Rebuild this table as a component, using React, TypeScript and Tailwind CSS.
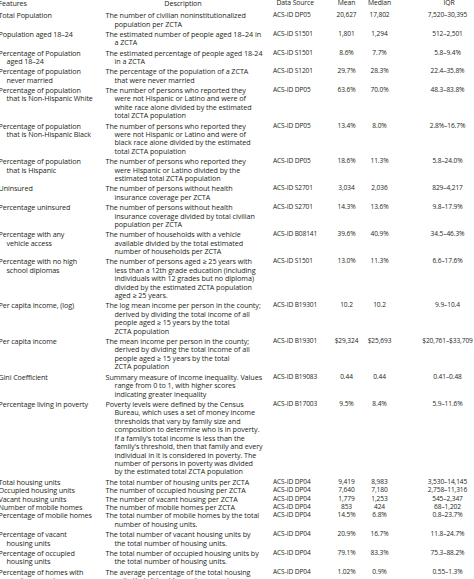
import React from 'react';

type Row = {
  feature: string[];
  desc: string[];
  source: string;
  mean: string;
  median: string;
  iqr: string;
  tight?: boolean;
};

const rows: Row[] = [
  { feature: ['Total Population'], desc: ['The number of civilian noninstitutionalized', 'population per ZCTA'], source: 'ACS-ID DP05', mean: '20,627', median: '17,802', iqr: '7,520–30,395' },
  { feature: ['Population aged 18–24'], desc: ['The estimated number of people aged 18–24 in', 'a ZCTA'], source: 'ACS-ID S1501', mean: '1,801', median: '1,294', iqr: '512–2,501' },
  { feature: ['Percentage of Population', 'aged 18–24'], desc: ['The estimated percentage of people aged 18-24', 'in a ZCTA'], source: 'ACS-ID S1501', mean: '8.6%', median: '7.7%', iqr: '5.8–9.4%' },
  { feature: ['Percentage of population', 'never married'], desc: ['The percentage of the population of a ZCTA', 'that were never married'], source: 'ACS-ID S1201', mean: '29.7%', median: '28.3%', iqr: '22.4–35.8%' },
  { feature: ['Percentage of population', 'that is Non-Hispanic White'], desc: ['The number of persons who reported they', 'were not Hispanic or Latino and were of', 'white race alone divided by the estimated', 'total ZCTA population'], source: 'ACS-ID DP05', mean: '63.6%', median: '70.0%', iqr: '48.3–83.8%' },
  { feature: ['Percentage of population', 'that is Non-Hispanic Black'], desc: ['The number of persons who reported they', 'were not Hispanic or Latino and were of', 'black race alone divided by the estimated', 'total ZCTA population'], source: 'ACS-ID DP05', mean: '13.4%', median: '8.0%', iqr: '2.8%–16.7%' },
  { feature: ['Percentage of population', 'that is Hispanic'], desc: ['The number of persons who reported they', 'were Hispanic or Latino divided by the', 'estimated total ZCTA population'], source: 'ACS-ID DP05', mean: '18.6%', median: '11.3%', iqr: '5.8–24.0%' },
  { feature: ['Uninsured'], desc: ['The number of persons without health', 'insurance coverage per ZCTA'], source: 'ACS-ID S2701', mean: '3,034', median: '2,036', iqr: '829–4,217' },
  { feature: ['Percentage uninsured'], desc: ['The number of persons without health', 'insurance coverage divided by total civilian', 'population per ZCTA'], source: 'ACS-ID S2701', mean: '14.3%', median: '13.6%', iqr: '9.8–17.9%' },
  { feature: ['Percentage with any', 'vehicle access'], desc: ['The number of households with a vehicle', 'available divided by the total estimated', 'number of households per ZCTA'], source: 'ACS-ID B08141', mean: '39.6%', median: '40.9%', iqr: '34.5–46.3%' },
  { feature: ['Percentage with no high', 'school diplomas'], desc: ['The number of persons aged ≥ 25 years with', 'less than a 12th grade education (including', 'individuals with 12 grades but no diploma)', 'divided by the estimated ZCTA population', 'aged ≥ 25 years.'], source: 'ACS-ID S1501', mean: '13.0%', median: '11.3%', iqr: '6.6–17.6%' },
  { feature: ['Per capita income, (log)'], desc: ['The log mean income per person in the county;', 'derived by dividing the total income of all', 'people aged ≥ 15 years by the total', 'ZCTA population'], source: 'ACS-ID B19301', mean: '10.2', median: '10.2', iqr: '9.9–10.4' },
  { feature: ['Per capita income'], desc: ['The mean income per person in the county;', 'derived by dividing the total income of all', 'people aged ≥ 15 years by the total', 'ZCTA population'], source: 'ACS-ID B19301', mean: '$29,324', median: '$25,693', iqr: '$20,761–$33,709' },
  { feature: ['Gini Coefficient'], desc: ['Summary measure of income inequality. Values', 'range from 0 to 1, with higher scores', 'indicating greater inequality'], source: 'ACS-ID B19083', mean: '0.44', median: '0.44', iqr: '0.41–0.48' },
  { feature: ['Percentage living in poverty'], desc: ['Poverty levels were defined by the Census', 'Bureau, which uses a set of money income', 'thresholds that vary by family size and', 'composition to determine who is in poverty.', "If a family's total income is less than the", "family's threshold, then that family and every", 'individual in it is considered in poverty. The', 'number of persons in poverty was divided', 'by the estimated total ZCTA population'], source: 'ACS-ID B17003', mean: '9.5%', median: '8.4%', iqr: '5.9–11.6%' },
  { feature: ['Total housing units'], desc: ['The total number of housing units per ZCTA'], source: 'ACS-ID DP04', mean: '9,419', median: '8,983', iqr: '3,530–14,145' },
  { feature: ['Occupied housing units'], desc: ['The number of occupied housing per ZCTA'], source: 'ACS-ID DP04', mean: '7,640', median: '7,180', iqr: '2,758–11,316', tight: true },
  { feature: ['Vacant housing units'], desc: ['The number of vacant housing per ZCTA'], source: 'ACS-ID DP04', mean: '1,779', median: '1,253', iqr: '545–2,347', tight: true },
  { feature: ['Number of mobile homes'], desc: ['The number of mobile homes per ZCTA'], source: 'ACS-ID DP04', mean: '853', median: '424', iqr: '68–1,202', tight: true },
  { feature: ['Percentage of mobile homes'], desc: ['The total number of mobile homes by the total', 'number of housing units.'], source: 'ACS-ID DP04', mean: '14.5%', median: '6.8%', iqr: '0.8–23.7%', tight: true },
  { feature: ['Percentage of vacant', 'housing units'], desc: ['The total number of vacant housing units by', 'the total number of housing units.'], source: 'ACS-ID DP04', mean: '20.9%', median: '16.7%', iqr: '11.8–24.7%' },
  { feature: ['Percentage of occupied', 'housing units'], desc: ['The total number of occupied housing units by', 'the total number of housing units.'], source: 'ACS-ID DP04', mean: '79.1%', median: '83.3%', iqr: '75.3–88.2%' },
  { feature: ['Percentage of homes with', 'no phone service'], desc: ['The average percentage of the total housing', 'units that did not have phone service'], source: 'ACS-ID DP04', mean: '1.02%', median: '0.9%', iqr: '0.55–1.3%' },
];

const cols = 'grid grid-cols-[107px_165px_59px_34px_32px_110px]';

const Lines: React.FC<{ lines: string[]; indent: string; className?: string }> = ({ lines, indent, className }) => (
  <div className={`whitespace-nowrap ${className ?? ''}`}>
    {lines.map((l, i) => (
      <div key={i} className={i > 0 ? indent : ''}>
        {l}
      </div>
    ))}
  </div>
);

export default function App() {
  return (
    <div
      className="w-[474px] h-[579px] overflow-hidden bg-white text-[#231f20] text-[7.2px] leading-[8.45px] tracking-[-0.1px]"
      style={{ fontFamily: '"Open Sans", Lato, sans-serif' }}
    >
      <div className="flex flex-col -mt-[0.6px] -ml-[1.5px]">
        {/* Header */}
        <div className={`${cols} pb-[3.3px]`}>
          <div>Features</div>
          <div className="text-center pr-[10px]">Description</div>
          <div className="pl-[6px] whitespace-nowrap text-[6.8px]">Data Source</div>
          <div className="text-center text-[6.8px]">Mean</div>
          <div className="text-center text-[6.8px]">Median</div>
          <div className="text-center pr-[3px] text-[6.8px]">IQR</div>
        </div>

        {/* Body */}
        {rows.map((r, i) => (
          <div key={i} className={`${cols} ${i === 0 || r.tight ? '' : 'pt-[1.8px]'}`}>
            <Lines lines={r.feature} indent="pl-[8px]" />
            <Lines lines={r.desc} indent="pl-[9px]" className="tracking-[-0.06px]" />
            <div className="pl-[2.5px] whitespace-nowrap text-[6.6px]">{r.source}</div>
            <div className="text-center whitespace-nowrap text-[6.6px]">{r.mean}</div>
            <div className="text-center whitespace-nowrap text-[6.6px]">{r.median}</div>
            <div className="text-center whitespace-nowrap pr-[6px] text-[6.6px]">{r.iqr}</div>
          </div>
        ))}
      </div>
    </div>
  );
}
